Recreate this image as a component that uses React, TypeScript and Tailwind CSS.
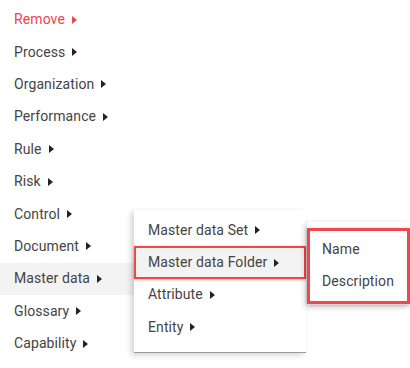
import React from "react";

const mainItems = [
	"Remove",
	"Process",
	"Organization",
	"Performance",
	"Rule",
	"Risk",
	"Control",
	"Document",
	"Master data",
	"Glossary",
	"Capability",
];

const subItems = ["Master data Set", "Master data Folder", "Attribute", "Entity"];

// Small right pointing caret used after every item with a submenu
function Caret({ color = "#222" }: { color?: string }) {
	return (
		<svg width="5" height="8" viewBox="0 0 5 8" className="ml-[7px] shrink-0">
			<path d="M0 0 L5 4 L0 8 Z" fill={color} />
		</svg>
	);
}

export default function App() {
	return (
		<div
			className="relative w-[410px] h-[368px] overflow-hidden bg-white text-[14px] text-[#444] tracking-[0.1px]"
			style={{ fontFamily: "Roboto, 'Liberation Sans', sans-serif" }}
		>
			{/* main menu */}
			<div className="flex flex-col pt-[3.5px] w-[134px]">
				{mainItems.map((item) => (
					<div
						key={item}
						className={`flex items-center h-[32.4px] pl-[14px] ${
							item === "Master data" ? "bg-[#f3f3f3]" : ""
						} ${item === "Remove" ? "text-[#f0434a]" : ""}`}
					>
						<span>{item}</span>
						<Caret color={item === "Remove" ? "#f0434a" : "#222"} />
					</div>
				))}
			</div>

			{/* second level menu */}
			<div className="absolute left-[134px] top-[210px] w-[172px] h-[143px] bg-white border-b border-[#9a9a9a] shadow-[-3px_2px_6px_rgba(0,0,0,0.18)]">
				<div className="flex flex-col pt-[4px]">
					{subItems.map((item) => (
						<div
							key={item}
							className={`flex items-center h-[32.4px] ${
								item === "Master data Folder"
									? "bg-[#f3f3f3] border-2 border-[#f2464c] pl-[12px] shadow-[0_1px_3px_rgba(0,0,0,0.25)]"
									: "pl-[14px]"
							}`}
						>
							<span>{item}</span>
							<Caret />
						</div>
					))}
				</div>
			</div>

			{/* third level menu */}
			<div className="absolute left-[307px] top-[222px] w-[103px] h-[83px] bg-white shadow-[-2px_2px_6px_rgba(0,0,0,0.2)]">
				<div className="mt-[6px] h-[76px] border-[3px] border-[#f2464c] flex flex-col pt-[2px] shadow-[0_1px_3px_rgba(0,0,0,0.25)]">
					<div className="flex items-center h-[32.4px] pl-[12px]">Name</div>
					<div className="flex items-center h-[32.4px] pl-[12px]">Description</div>
				</div>
			</div>
		</div>
	);
}
